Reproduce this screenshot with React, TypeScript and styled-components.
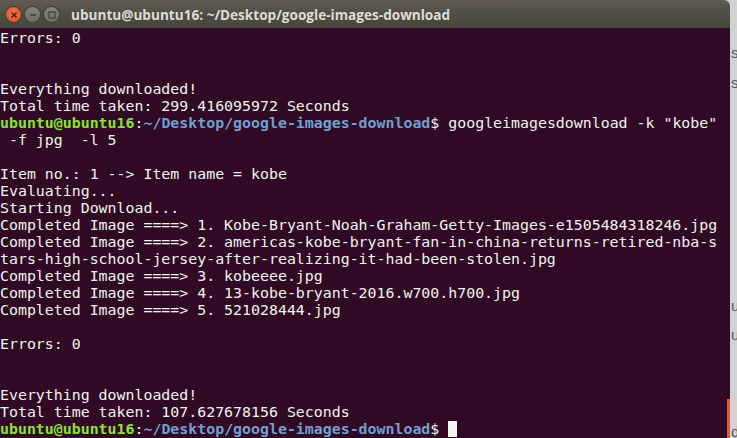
import React from "react";
import styled, { createGlobalStyle } from "styled-components";

const Global = createGlobalStyle`
  html, body { margin: 0; padding: 0; width: 737px; height: 438px; overflow: hidden; background: #c9c9c7; }
`;

const Desktop = styled.div`
  display: flex;
  width: 737px;
  height: 438px;
  overflow: hidden;
  background: linear-gradient(90deg, #a9a9a7, #c4c4c2 40%, #d2d2d0);
`;

const Window = styled.div`
  width: 730px;
  height: 438px;
  display: flex;
  flex-direction: column;
  flex: none;
  border-top-right-radius: 6px;
  overflow: hidden;
`;

const TitleBar = styled.div`
  height: 28px;
  box-sizing: border-box;
  padding: 1px 0 0 6px;
  flex: none;
  display: flex;
  align-items: center;
  background: linear-gradient(#5f5d52, #4f4e46 50%, #45453e);
`;

const WindowButtons = styled.div`
  display: flex;
  gap: 4px;
  width: 65px;
  flex: none;
`;

const WindowButton = styled.div<{ $close?: boolean }>`
  width: 15px;
  height: 15px;
  border-radius: 50%;
  display: flex;
  align-items: center;
  justify-content: center;
  background: ${(p) => (p.$close ? "radial-gradient(circle at 50% 40%, #f2764a, #d9491f)" : "linear-gradient(#85847c, #706f68)")};
  box-shadow: 0 0 0 1px #3f3e38;
`;

const Title = styled.div`
  font-family: "Open Sans", "Liberation Sans", sans-serif;
  font-weight: 700;
  font-size: 13.6px;
  color: #dfdbd2;
  white-space: nowrap;
`;

const Terminal = styled.div`
  flex: 1;
  background: #300a24;
  padding-top: 2px;
  position: relative;
  overflow: hidden;
`;

const Line = styled.div`
  font-family: "DejaVu Sans Mono", monospace;
  font-size: 14.9px;
  line-height: 17px;
  height: 17px;
  color: #f2f2ee;
  white-space: pre;
`;

const User = styled.span`
  color: #8ae234;
  font-weight: bold;
`;

const Path = styled.span`
  color: #729fcf;
  font-weight: bold;
`;

const Cursor = styled.span`
  display: inline-block;
  width: 9px;
  height: 16px;
  background: #f4f4f0;
  vertical-align: -3px;
`;

const ScrollThumb = styled.div`
  position: absolute;
  right: 0;
  bottom: 0;
  width: 3px;
  height: 39px;
  background: #d4603a;
`;

const Behind = styled.div`
  flex: 1;
  overflow: hidden;
  position: relative;
  font-family: "Liberation Sans", sans-serif;
  font-size: 15px;
  color: #50596a;
`;

const BehindLetter = styled.span<{ $top: number }>`
  position: absolute;
  left: 1px;
  top: ${(p) => p.$top}px;
`;

const Prompt = () => (
  <>
    <User>ubuntu@ubuntu16</User>:<Path>~/Desktop/google-images-download</Path>$
  </>
);

const lines: React.ReactNode[] = [
  "Errors: 0",
  "",
  "",
  "Everything downloaded!",
  "Total time taken: 299.416095972 Seconds",
  <><Prompt /> googleimagesdownload -k "kobe"</>,
  " -f jpg  -l 5",
  "",
  "Item no.: 1 --> Item name = kobe",
  "Evaluating...",
  "Starting Download...",
  "Completed Image ====> 1. Kobe-Bryant-Noah-Graham-Getty-Images-e1505484318246.jpg",
  "Completed Image ====> 2. americas-kobe-bryant-fan-in-china-returns-retired-nba-s",
  "tars-high-school-jersey-after-realizing-it-had-been-stolen.jpg",
  "Completed Image ====> 3. kobeeee.jpg",
  "Completed Image ====> 4. 13-kobe-bryant-2016.w700.h700.jpg",
  "Completed Image ====> 5. 521028444.jpg",
  "",
  "Errors: 0",
  "",
  "",
  "Everything downloaded!",
  "Total time taken: 107.627678156 Seconds",
  <><Prompt /> <Cursor /></>,
];

const letters: [string, number][] = [
  ["s", 44], ["s", 74], ["u", 297], ["u", 326], ["d", 423],
];

export default function App() {
  return (
    <Desktop>
      <Global />
      <Window>
        <TitleBar>
          <WindowButtons>
            <WindowButton $close>
              <svg width="8" height="8" viewBox="0 0 8 8"><path d="M1.5 1.5l5 5M6.5 1.5l-5 5" stroke="#4a1a0a" strokeWidth="1.4" /></svg>
            </WindowButton>
            <WindowButton>
              <svg width="8" height="8" viewBox="0 0 8 8"><path d="M1 4h6" stroke="#3e3d38" strokeWidth="1.4" /></svg>
            </WindowButton>
            <WindowButton>
              <svg width="8" height="8" viewBox="0 0 8 8"><rect x="1" y="1" width="6" height="6" fill="none" stroke="#3e3d38" strokeWidth="1.2" /></svg>
            </WindowButton>
          </WindowButtons>
          <Title>ubuntu@ubuntu16: ~/Desktop/google-images-download</Title>
        </TitleBar>
        <Terminal>
          {lines.map((l, i) => (
            <Line key={i}>{l}</Line>
          ))}
          <ScrollThumb />
        </Terminal>
      </Window>
      <Behind>
        {letters.map(([c, t], i) => (
          <BehindLetter key={i} $top={t}>{c}</BehindLetter>
        ))}
      </Behind>
    </Desktop>
  );
}
